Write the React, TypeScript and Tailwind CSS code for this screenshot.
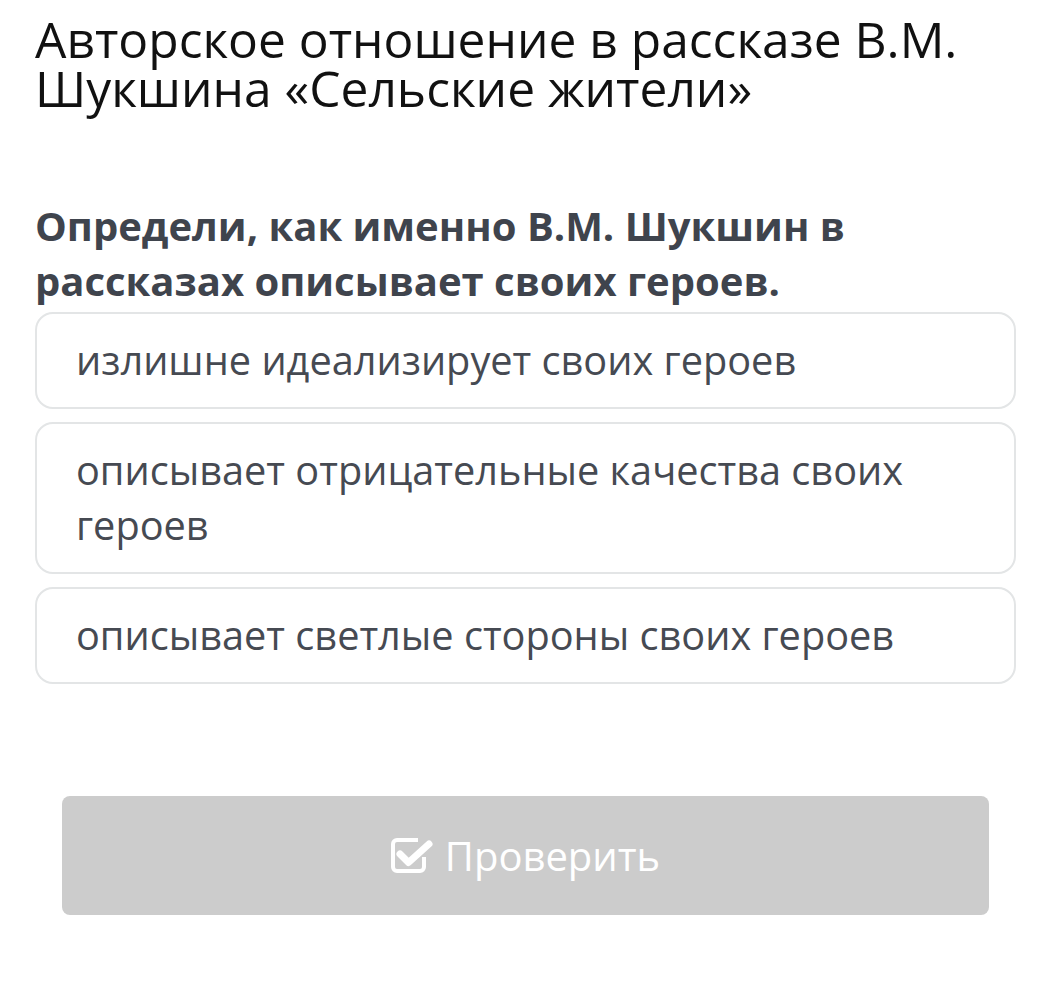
const options = [
  "излишне идеализирует своих героев",
  "описывает отрицательные качества своих героев",
  "описывает светлые стороны своих героев",
];

const CheckIcon = () => (
  <svg width="43" height="36" viewBox="0 0 43 36" fill="none" aria-hidden="true">
    <path
      d="M33 19 V29 a4 4 0 0 1 -4 4 H6 a4 4 0 0 1 -4 -4 V6 a4 4 0 0 1 4 -4 H27"
      stroke="white"
      strokeWidth="4"
    />
    <path
      d="M9 16 L17.5 24.5 L38 6"
      stroke="white"
      strokeWidth="7"
      strokeLinecap="round"
      strokeLinejoin="round"
    />
  </svg>
);

export default function App() {
  return (
    <div className="min-h-screen bg-white font-['Open_Sans',sans-serif]">
      <div className="px-[35px] pt-[15px]">
        <h1 className="text-[49.7px] leading-[49px] font-normal text-[#111]">
          Авторское отношение в рассказе В.М. Шукшина «Сельские жители»
        </h1>

        <p className="mt-[85px] text-[40px] leading-[55px] font-bold text-[#3f444d] pr-[100px]">
          Определи, как именно В.М. Шукшин в рассказах описывает своих героев.
        </p>

        <div className="mt-[4px] mr-[-11px] flex flex-col gap-[13px]">
          {options.map((o) => (
            <div
              key={o}
              className="rounded-[18px] border-2 border-[#e3e5e6] px-[39px] py-[19px] text-[39.7px] leading-[55px] text-[#464a52]"
            >
              {o}
            </div>
          ))}
        </div>

        <button className="mt-[112px] ml-[27px] flex h-[119px] w-[927px] items-center justify-center gap-[11px] rounded-[8px] bg-[#cccccc] text-[40px] text-white">
          <CheckIcon />
          <span>Проверить</span>
        </button>
      </div>
    </div>
  );
}
